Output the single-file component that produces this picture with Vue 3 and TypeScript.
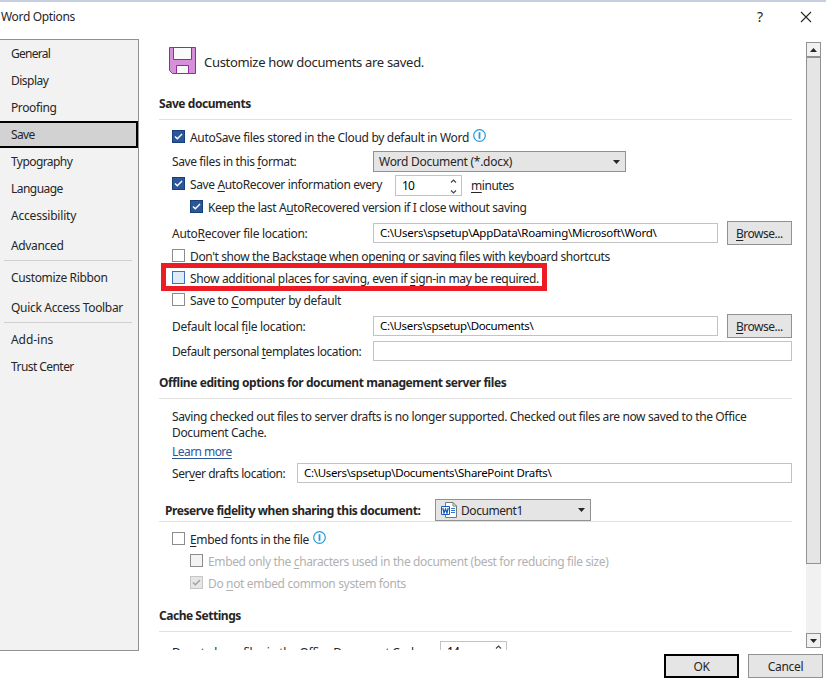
<script setup lang="ts">
import type { Directive } from 'vue'

interface NavItem {
  label: string
  width: number
  selected?: boolean
  spaced?: boolean
  divider?: boolean
}

const nav: NavItem[] = [
  { label: 'General', width: 40 },
  { label: 'Display', width: 38 },
  { label: 'Proofing', width: 46 },
  { label: 'Save', width: 24.5, selected: true },
  { label: 'Typography', width: 62 },
  { label: 'Language', width: 52.5 },
  { label: 'Accessibility', width: 65.5 },
  { label: 'Advanced', width: 53, spaced: true, divider: true },
  { label: 'Customize Ribbon', width: 97 },
  { label: 'Quick Access Toolbar', width: 112.5, spaced: true, divider: true },
  { label: 'Add-ins', width: 42.5 },
  { label: 'Trust Center', width: 63.5 },
]

// Tracks a label so that its last letter ends at the given width in pixels.
const vFit: Directive<HTMLElement, number> = {
  mounted(el, { value }) {
    const count = (el.textContent ?? '').length
    const natural = el.getBoundingClientRect().width
    if (count > 1) el.style.letterSpacing = `${(value - 0.2 - natural) / (count - 1)}px`
  },
}
</script>

<template>
  <div class="dialog">
    <header class="titlebar">
      <span v-fit="74.5" class="t title">Word Options</span>
      <span class="help">?</span>
      <svg class="close" width="12" height="12" viewBox="0 0 12 12"><path d="M1 1L11 11M11 1L1 11" /></svg>
    </header>

    <div class="body">
      <nav class="sidebar">
        <template v-for="item in nav" :key="item.label">
          <div class="nav-item" :class="{ selected: item.selected, spaced: item.spaced }">
            <span v-fit="item.width" class="t">{{ item.label }}</span>
          </div>
          <div v-if="item.divider" class="divider"></div>
        </template>
      </nav>

      <main class="content">
        <div class="intro">
          <svg width="27" height="27" viewBox="0 0 27 27">
            <path d="M.5.5H26.5V26.5H3.5L.5 23.5Z" fill="#d590d9" stroke="#922b9b" />
            <path d="M4.5.5H22.5V12.5H4.5ZM7.5 26.5V18.5H19.5V26.5Z" fill="#fafafa" stroke="#922b9b" />
          </svg>
          <span v-fit="220.5" class="t lead">Customize how documents are saved.</span>
        </div>

        <h2 class="first"><span v-fit="92.5" class="t">Save documents</span></h2>

        <div class="row r-autosave">
          <span class="check on"><svg viewBox="0 0 13 13"><path d="M3 6.5L5.3 8.8L10 4" /></svg></span>
          <span v-fit="279.5" class="t">AutoSave files stored in the Cloud by default in Word</span>
          <svg class="info" width="13" height="13" viewBox="0 0 13 13"><circle cx="6.5" cy="6.5" r="5.8" /><path d="M6.5 3.2V9.8" /></svg>
        </div>

        <div class="row r-format">
          <span class="label"><span v-fit="125" class="t">Save files in this <u>f</u>ormat:</span></span>
          <div class="select format">
            <span v-fit="133.5" class="t">Word Document (*.docx)</span>
            <svg class="arrow" width="7" height="4" viewBox="0 0 7 4"><path d="M0 0H7L3.5 4Z" /></svg>
          </div>
        </div>

        <div class="row r-every">
          <span class="check on"><svg viewBox="0 0 13 13"><path d="M3 6.5L5.3 8.8L10 4" /></svg></span>
          <span class="every"><span v-fit="192.5" class="t">Save <u>A</u>utoRecover information every</span></span>
          <div class="spin">
            <span v-fit="13" class="t">10</span>
            <svg width="7" height="15" viewBox="0 0 7 15"><path d="M1 3.5L3.5 1L6 3.5M1 11.5L3.5 14L6 11.5" /></svg>
          </div>
          <span v-fit="43.5" class="t minutes"><u>m</u>inutes</span>
        </div>

        <div class="row r-keep">
          <span class="check on"><svg viewBox="0 0 13 13"><path d="M3 6.5L5.3 8.8L10 4" /></svg></span>
          <span v-fit="319" class="t">Keep the last A<u>u</u>toRecovered version if I close without saving</span>
        </div>

        <div class="row r-location">
          <span class="label"><span v-fit="136" class="t">Auto<u>R</u>ecover file location:</span></span>
          <div class="field path"><span v-fit="277" class="t">C:\Users\spsetup\AppData\Roaming\Microsoft\Word\</span></div>
          <div class="browse"><span v-fit="47.5" class="t"><u>B</u>rowse...</span></div>
        </div>

        <div class="row r-backstage">
          <span class="check"></span>
          <span v-fit="420.5" class="t">Don't <u>s</u>how the Backstage when opening or saving files with keyboard shortcuts</span>
        </div>

        <div class="row r-places">
          <span class="check hover"></span>
          <span v-fit="349.5" class="t">Show additional places for saving, even if <u>s</u>ign-in may be required.</span>
          <div class="highlight"></div>
        </div>

        <div class="row r-computer">
          <span class="check"></span>
          <span v-fit="151.5" class="t">Save to <u>C</u>omputer by default</span>
        </div>

        <div class="row r-location r-local">
          <span class="label"><span v-fit="134" class="t">Default local f<u>i</u>le location:</span></span>
          <div class="field path"><span v-fit="154" class="t">C:\Users\spsetup\Documents\</span></div>
          <div class="browse"><span v-fit="47.5" class="t"><u>B</u>rowse...</span></div>
        </div>

        <div class="row r-templates">
          <span class="label"><span v-fit="190" class="t">Default personal <u>t</u>emplates location:</span></span>
          <div class="field wide"></div>
        </div>

        <h2 class="offline"><span v-fit="348" class="t">Offline editing options for document management server files</span></h2>

        <p class="note">
          <span v-fit="575" class="t">Saving checked out files to server drafts is no longer supported. Checked out files are now saved to the Office</span>
          <span v-fit="95" class="t">Document Cache.</span>
          <a v-fit="60.5" class="t">Learn more</a>
        </p>

        <div class="row r-server">
          <span class="label"><span v-fit="114" class="t">Ser<u>v</u>er drafts location:</span></span>
          <div class="field wide"><span v-fit="248" class="t">C:\Users\spsetup\Documents\SharePoint Drafts\</span></div>
        </div>

        <h2 class="preserve">
          <span class="caption"><span v-fit="256" class="t">Preserve fi<u>d</u>elity when sharing this document:</span></span>
          <div class="select doc">
            <svg width="17" height="17" viewBox="0 0 17 17">
              <path d="M4.5.5H12L15.5 4V15.5H4.5Z" fill="#fff" stroke="#777" />
              <path d="M12 .5V4H15.5" fill="none" stroke="#777" />
              <path d="M10 6.5H14M10 8.5H14M10 10.5H14" stroke="#2b7cd3" />
              <path d="M.5 4.5H8.5V12.5H.5Z" fill="#fff" stroke="#185abd" />
              <path d="M1.8 6L3 11L4.5 7L6 11L7.2 6" fill="none" stroke="#185abd" stroke-width="1.3" />
            </svg>
            <span v-fit="62.5" class="t">Document1</span>
            <svg class="arrow" width="7" height="4" viewBox="0 0 7 4"><path d="M0 0H7L3.5 4Z" /></svg>
          </div>
        </h2>

        <div class="row r-embed">
          <span class="check"></span>
          <span v-fit="119.5" class="t"><u>E</u>mbed fonts in the file</span>
          <svg class="info" width="13" height="13" viewBox="0 0 13 13"><circle cx="6.5" cy="6.5" r="5.8" /><path d="M6.5 3.2V9.8" /></svg>
        </div>
        <div class="row sub off">
          <span class="check empty"></span>
          <span v-fit="401" class="t">Embed only the <u>c</u>haracters used in the document (best for reducing file size)</span>
        </div>
        <div class="row sub off">
          <span class="check ticked"><svg viewBox="0 0 13 13"><path d="M3 6.5L5.3 8.8L10 4" /></svg></span>
          <span v-fit="198.5" class="t">Do <u>n</u>ot embed common system fonts</span>
        </div>

        <h2 class="cache"><span v-fit="82.5" class="t">Cache Settings</span></h2>

        <div class="row r-days">
          <span class="days"><span v-fit="256" class="t">Days to keep files in the Office Document Cache:</span></span>
          <div class="spin">
            <span v-fit="13" class="t">14</span>
            <svg width="7" height="15" viewBox="0 0 7 15"><path d="M1 3.5L3.5 1L6 3.5M1 11.5L3.5 14L6 11.5" /></svg>
          </div>
        </div>
      </main>

      <div class="scrollbar">
        <div class="step"><svg width="7" height="4" viewBox="0 0 7 4"><path d="M0 4H7L3.5 0Z" /></svg></div>
        <div class="thumb"></div>
        <div class="step last"><svg width="7" height="4" viewBox="0 0 7 4"><path d="M0 0H7L3.5 4Z" /></svg></div>
      </div>
    </div>

    <footer class="footer">
      <button class="ok"><span v-fit="16.5" class="t">OK</span></button>
      <button><span v-fit="36" class="t">Cancel</span></button>
    </footer>
  </div>
</template>

<style>
body {
  margin: 0;
  overflow: hidden;
}
</style>

<style scoped>
* {
  box-sizing: border-box;
}
.dialog {
  width: 826px;
  height: 680px;
  overflow: hidden;
  background: #fff;
  border-top: 2px solid #c6d0e1;
  color: #262626;
  font: 12px/16px 'Noto Sans', 'Open Sans', sans-serif;
  display: flex;
  flex-direction: column;
}
.t {
  display: block;
  flex: none;
  width: max-content;
  white-space: pre;
  line-height: 18px;
  margin-bottom: -2px;
}
u {
  text-decoration: underline;
  text-decoration-thickness: 1px;
  text-underline-offset: 2px;
}
.titlebar {
  height: 37px;
  flex: none;
  display: flex;
  align-items: flex-start;
  padding: 6px 14px 0 1px;
}
.title {
  margin-right: auto;
}
.help {
  font-size: 14px;
  line-height: 18px;
  margin-right: 37px;
}
.close {
  margin-top: 3px;
  fill: none;
  stroke: #262626;
  stroke-width: 1.1;
}
.body {
  height: 611px;
  flex: none;
  display: flex;
}
.sidebar {
  width: 139px;
  height: 612px;
  flex: none;
  background: #f2f2f2;
  border: 1px solid #919191;
  border-left: 0;
}
.nav-item {
  height: 27px;
  padding: 5px 0 0 11px;
}
.nav-item.spaced {
  margin-top: 3px;
}
.nav-item.selected {
  background: #d2d2d2;
  border: 2px solid #000;
  border-left: 0;
  padding-top: 3px;
}
.divider {
  height: 1px;
  background: #d0d0d0;
  margin: 1px 6px 3px 4px;
}
.content {
  width: 653px;
  flex: none;
  padding-left: 20px;
  overflow: hidden;
}
.intro {
  height: 49px;
  display: flex;
  align-items: flex-start;
  padding: 8px 0 0 10px;
  gap: 8px;
}
.lead {
  font-size: 13px;
  margin-top: 6px;
}
h2 {
  margin: 0;
  font-size: 12px;
  font-weight: 700;
  border-bottom: 1px solid #e1e1e1;
  display: flex;
  align-items: flex-start;
}
h2.first {
  height: 32px;
  padding-top: 7px;
}
h2.offline {
  height: 38px;
  padding-top: 13px;
}
h2.preserve {
  height: 39px;
  padding: 19px 0 0 6px;
}
h2.cache {
  height: 35px;
  padding-top: 10px;
}
.caption {
  width: 270px;
  flex: none;
}
.row {
  display: flex;
  align-items: flex-start;
  padding-left: 13px;
}
.check {
  width: 13px;
  height: 13px;
  flex: none;
  margin: 1px 5px 0 0;
  border: 1px solid #8c8c8c;
  background: #fff;
}
.check svg {
  display: block;
  width: 13px;
  height: 13px;
  margin: -1px;
  fill: none;
  stroke: #fff;
  stroke-width: 1.4;
}
.check.on {
  background: #2b579a;
  border-color: #173f78;
}
.check.hover {
  background: #e0ebfa;
  border-color: #3d72b8;
}
.check.empty {
  background: #f3f3f3;
}
.check.ticked {
  background: #e6e6e6;
  border-color: #c6c6c6;
}
.check.ticked svg {
  stroke: #a0a0a0;
}
.info {
  flex: none;
  margin-left: 4px;
  fill: none;
  stroke: #2b98d1;
  stroke-width: 1.2;
}
.info path {
  stroke-width: 1.8;
}
.label {
  width: 201px;
  flex: none;
  padding-top: 2px;
  display: flex;
}
.select {
  background: #e5e5e5;
  border: 1px solid #919191;
  display: flex;
  font-weight: 400;
}
.arrow {
  margin-left: auto;
}
.select .arrow {
  fill: #262626;
}
.format {
  width: 253px;
  height: 21px;
  padding: 1px 5px 0 5px;
}
.format .arrow {
  margin-top: 7px;
}
.doc {
  width: 156px;
  height: 22px;
  margin-top: -3px;
  padding: 2px 5px;
}
.doc .t {
  margin: 0 0 0 3px;
}
.doc .arrow {
  margin-top: 6px;
}
.field {
  height: 20px;
  border: 1px solid #c3c3c3;
  padding: 0 0 0 6px;
  font-size: 11.5px;
  color: #000;
}
.path {
  width: 345px;
  margin-top: 2px;
}
.browse {
  width: 65px;
  height: 24px;
  margin-left: 9px;
  border: 1px solid #919191;
  background: #e5e5e5;
  padding: 3px 0 0 8px;
}
.spin {
  width: 67px;
  height: 21px;
  flex: none;
  border: 1px solid #c3c3c3;
  padding: 1px 4px 0 6px;
  display: flex;
  justify-content: space-between;
  color: #000;
}
.spin svg {
  margin-top: 2px;
  fill: none;
  stroke: #444;
  stroke-width: 1.2;
}
.r-autosave {
  margin-top: 9px;
  height: 22px;
}
.r-format {
  height: 24px;
}
.r-every {
  height: 24px;
}
.r-every .check {
  margin-top: 2px;
}
.every {
  width: 205px;
  display: flex;
  padding-top: 1px;
}
.minutes {
  margin-top: 2px;
  margin-left: 9px;
}
.r-keep {
  height: 22px;
  padding-left: 31px;
}
.r-location {
  height: 27px;
}
.r-location .label {
  padding-top: 4px;
}
.r-backstage,
.r-places {
  height: 22px;
}
.r-places {
  position: relative;
}
.highlight {
  position: absolute;
  left: 2px;
  top: -7px;
  width: 386px;
  height: 28px;
  border: 5px solid #ed1c24;
}
.r-computer {
  height: 22px;
}
.r-templates {
  height: 20px;
}
.wide {
  flex: 1;
}
.note {
  margin: 0;
  padding: 9px 0 0 13px;
  height: 64px;
  display: flex;
  flex-direction: column;
  align-items: flex-start;
}
.note a {
  margin-top: 3px;
  color: #2b579a;
  text-decoration: underline;
  text-underline-offset: 2px;
}
.r-server .label {
  width: 125px;
}
.r-embed {
  margin-top: 9px;
  height: 22px;
}
.sub {
  padding-left: 31px;
  height: 22px;
}
.off {
  color: #b1b1b1;
}
.r-days {
  padding-top: 9px;
}
.days {
  width: 268px;
  padding-top: 3px;
  display: flex;
}
.scrollbar {
  width: 15px;
  height: 606px;
  margin: 3px 0 0 14px;
  background: #f1f1f1;
  display: flex;
  flex-direction: column;
}
.step,
.thumb {
  border: 1px solid #919191;
  background: #e5e5e5;
}
.step {
  height: 15px;
  display: flex;
  align-items: center;
  justify-content: center;
  background: #f1f1f1;
  fill: #262626;
}
.thumb {
  height: 507px;
}
.last {
  margin-top: auto;
}
.footer {
  display: flex;
  justify-content: flex-end;
  gap: 9px;
  padding: 4px 3px 0 0;
}
button {
  width: 75px;
  height: 24px;
  padding: 0;
  border: 1px solid #919191;
  background: #e5e5e5;
  color: #262626;
  font: inherit;
  display: flex;
  align-items: center;
  justify-content: center;
}
button .t {
  margin: 1px 0 0;
}
button.ok {
  border: 2px solid #000;
}
</style>
